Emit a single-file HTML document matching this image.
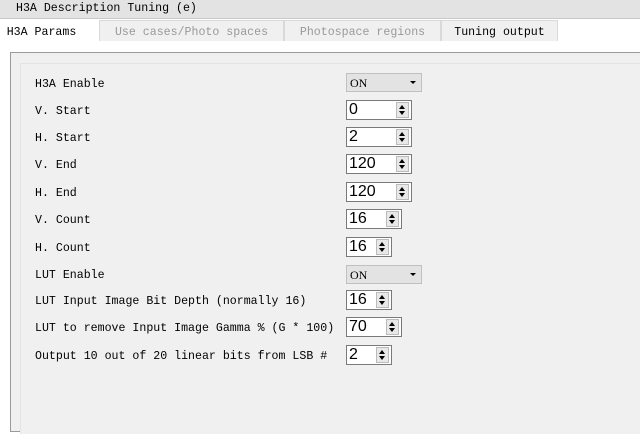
<!DOCTYPE html>
<html><head><style>
body{margin:0;width:640px;height:425px;overflow:hidden;background:#fff;font-family:"Liberation Mono","Noto Sans CJK SC",monospace;font-size:11.6px;color:#000;position:relative}
.title{position:absolute;left:0;top:0;width:640px;height:18px;background:#e3e3e3;border-bottom:1px solid #c8c8c8}
.title span{position:absolute;left:16px;top:2px}
.tab{position:absolute;top:20px;height:21px;border:1px solid #d9d9d9;border-bottom:none;background:#f0f0f0;color:#999;box-sizing:border-box;padding:5px 0 0;text-align:center}
.tab.on{background:#fff;color:#000;border-color:#fff}
.outer{position:absolute;left:10px;top:52px;width:640px;height:380px;border:1px solid #9a9a9a;border-right:none;background:#f0f0f0;box-sizing:border-box}
.inner{position:absolute;left:20px;top:63px;width:630px;height:370px;border-left:1px solid #e3e3e3;border-top:1px solid #e3e3e3;background:#f0f0f0}
.lbl{position:absolute;left:35px}
.spin{position:absolute;left:346px;height:20px;border:1px solid #7a7a7a;background:#fff;box-sizing:border-box;font-family:"Liberation Sans",sans-serif;font-size:16px;line-height:18px;padding-left:2px}
.spin .b{position:absolute;right:2px;top:1px;width:13px;height:16px;background:#e8e8e8;border:1px solid #bbb;box-sizing:border-box}
.spin .b:before{content:"";position:absolute;left:2px;top:2px;border:3.5px solid transparent;border-top:none;border-bottom:4px solid #000}
.spin .b:after{content:"";position:absolute;left:2px;bottom:2px;border:3.5px solid transparent;border-bottom:none;border-top:4px solid #000}
.combo{position:absolute;left:346px;width:76px;height:19px;background:#e3e3e3;border:1px solid #c0c0c0;box-sizing:border-box;font-family:"Liberation Serif",serif;font-size:12px;padding:2px 0 0 3px}
.combo:after{content:"";position:absolute;right:5px;top:7px;border:3px solid transparent;border-bottom:none;border-top:3px solid #000}
</style></head><body>
<div class="title"><span>H3A Description Tuning (e)</span></div>
<div class="tab on" style="left:0;width:83px">H3A Params</div>
<div class="tab" style="left:99px;width:185px">Use cases/Photo spaces</div>
<div class="tab" style="left:284px;width:157px">Photospace regions</div>
<div class="tab" style="left:441px;width:117px;color:#000">Tuning output</div>
<div class="outer"></div>
<div class="inner"></div>
<div class="lbl" style="top:78px">H3A Enable</div><div class="combo" style="top:73px">ON</div>
<div class="lbl" style="top:105px">V. Start</div><div class="spin" style="top:100px;width:66px">0<div class="b"></div></div>
<div class="lbl" style="top:132px">H. Start</div><div class="spin" style="top:127px;width:66px">2<div class="b"></div></div>
<div class="lbl" style="top:159px">V. End</div><div class="spin" style="top:154px;width:66px">120<div class="b"></div></div>
<div class="lbl" style="top:187px">H. End</div><div class="spin" style="top:182px;width:66px">120<div class="b"></div></div>
<div class="lbl" style="top:214px">V. Count</div><div class="spin" style="top:209px;width:56px">16<div class="b"></div></div>
<div class="lbl" style="top:242px">H. Count</div><div class="spin" style="top:237px;width:46px">16<div class="b"></div></div>
<div class="lbl" style="top:269px">LUT Enable</div><div class="combo" style="top:265px">ON</div>
<div class="lbl" style="top:295px">LUT Input Image Bit Depth (normally 16)</div><div class="spin" style="top:290px;width:46px">16<div class="b"></div></div>
<div class="lbl" style="top:322px">LUT to remove Input Image Gamma % (G * 100)</div><div class="spin" style="top:317px;width:56px">70<div class="b"></div></div>
<div class="lbl" style="top:350px">Output 10 out of 20 linear bits from LSB #</div><div class="spin" style="top:345px;width:46px">2<div class="b"></div></div>
</body></html>
